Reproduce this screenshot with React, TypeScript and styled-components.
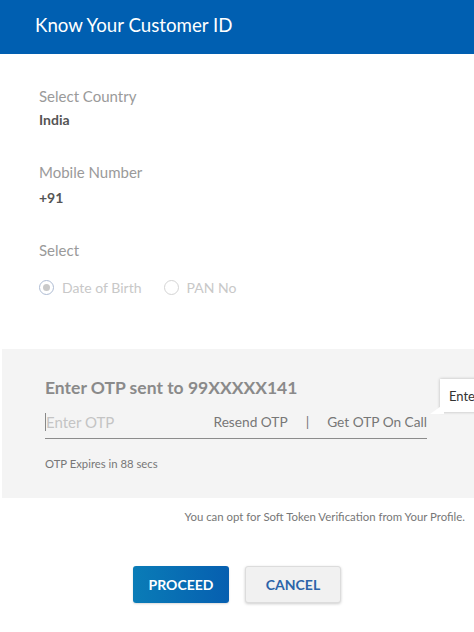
import React, { useState } from 'react';
import styled, { createGlobalStyle } from 'styled-components';

const GlobalStyle = createGlobalStyle`
  html, body {
    margin: 0;
    padding: 0;
    background: #ffffff;
    overflow-x: hidden;
  }
  body {
    font-family: Lato, "Open Sans", "Liberation Sans", sans-serif;
  }
`;

const Page = styled.div`
  width: 474px;
  min-height: 632px;
  overflow: hidden;
`;

const Header = styled.div`
  height: 54px;
  background: #005fb1;
  color: #ffffff;
  display: flex;
  align-items: center;
  padding: 0 0 4px 35px;
  box-sizing: border-box;
  font-size: 18.7px;
`;

const Form = styled.div`
  padding: 32px 0 0 39px;
  display: flex;
  flex-direction: column;
`;

const Field = styled.div<{ valueGap?: number }>`
  display: flex;
  flex-direction: column;
  gap: ${p => p.valueGap ?? 4}px;
  margin-bottom: 32px;
`;

const Label = styled.div`
  font-size: 15px;
  line-height: 20px;
  color: #9a9a9a;
`;

const Value = styled.div`
  font-size: 14px;
  line-height: 20px;
  font-weight: 700;
  color: #555555;
`;

const RadioRow = styled.div`
  display: flex;
  align-items: center;
  gap: 22px;
  margin-top: 17px;
  height: 20px;
`;

const RadioOption = styled.label`
  display: flex;
  align-items: center;
  gap: 8px;
  font-size: 14px;
  color: #c8c8c8;
  cursor: pointer;
`;

const RadioDot = styled.span<{ checked: boolean }>`
  width: 13px;
  height: 13px;
  border-radius: 50%;
  border: 1px solid ${p => (p.checked ? '#aebcd3' : '#d4d4d4')};
  display: flex;
  align-items: center;
  justify-content: center;
  background: #ffffff;

  &::after {
    content: '';
    width: 7px;
    height: 7px;
    border-radius: 50%;
    background: ${p => (p.checked ? '#c9c9c9' : 'transparent')};
  }
`;

const OtpPanel = styled.div`
  position: relative;
  margin: 52px 0 0 2px;
  background: #f4f4f4;
  padding: 28px 0 27px 43px;
  display: flex;
  flex-direction: column;
`;

const OtpTitle = styled.div`
  font-size: 17.5px;
  line-height: 22px;
  font-weight: 700;
  color: #8a8a8a;
`;

const OtpRow = styled.div`
  width: 382px;
  margin-top: 6px;
  height: 34px;
  display: flex;
  align-items: center;
  border-bottom: 1px solid #8c8c8c;
  box-sizing: border-box;
`;

const OtpInput = styled.input`
  flex: 1;
  min-width: 0;
  border: none;
  border-left: 1px solid #888;
  background: transparent;
  outline: none;
  font-family: inherit;
  font-size: 15px;
  height: 18px;
  padding: 0;
  color: #555;

  &::placeholder {
    color: #c4c4c4;
  }
`;

const LinkText = styled.span`
  font-size: 13.7px;
  color: #777777;
  white-space: nowrap;
`;

const Divider = styled.span`
  font-size: 14px;
  color: #777777;
  margin: 0 18px;
`;

const Expiry = styled.div`
  font-size: 11.3px;
  line-height: 14px;
  color: #777777;
  margin-top: 18px;
`;

const Tooltip = styled.div`
  position: absolute;
  left: 438px;
  top: 30px;
  width: 80px;
  height: 33px;
  background: #ffffff;
  box-shadow: 0 0 3px rgba(0, 0, 0, 0.25);
  padding-left: 9px;
  box-sizing: border-box;
  display: flex;
  align-items: center;
  font-size: 13px;
  color: #333333;
  white-space: nowrap;

  &::before {
    content: '';
    position: absolute;
    left: -10px;
    bottom: -2px;
    width: 14px;
    height: 10px;
    background: #ffffff;
    clip-path: polygon(100% 0, 100% 100%, 0 100%);
    filter: drop-shadow(0 0 1px rgba(0, 0, 0, 0.3));
  }
`;

const Note = styled.div`
  font-size: 11.4px;
  line-height: 14px;
  color: #777777;
  text-align: right;
  padding-right: 9px;
  margin-top: 12px;
`;

const Actions = styled.div`
  display: flex;
  justify-content: center;
  gap: 16px;
  margin-top: 42px;
`;

const Button = styled.button<{ primary?: boolean }>`
  width: 96px;
  height: 37px;
  border-radius: 3px;
  font-family: inherit;
  font-size: 14px;
  font-weight: 700;
  cursor: pointer;
  border: ${p => (p.primary ? 'none' : '1px solid #dcdcdc')};
  background: ${p => (p.primary ? 'linear-gradient(90deg, #0a7cb7 0%, #065fb0 100%)' : '#f1f1f1')};
  color: ${p => (p.primary ? '#ffffff' : '#2c64a9')};
  box-shadow: ${p => (p.primary ? '0 1px 2px rgba(0,0,0,0.15)' : '0 1px 3px rgba(0,0,0,0.2)')};
`;

export default function App() {
  const [choice, setChoice] = useState<'dob' | 'pan'>('dob');
  const [otp, setOtp] = useState('');

  return (
    <Page>
      <GlobalStyle />
      <Header>Know Your Customer ID</Header>
      <Form>
        <Field>
          <Label>Select Country</Label>
          <Value>India</Value>
        </Field>
        <Field valueGap={6}>
          <Label>Mobile Number</Label>
          <Value>+91</Value>
        </Field>
        <Label>Select</Label>
        <RadioRow>
          <RadioOption onClick={() => setChoice('dob')}>
            <RadioDot checked={choice === 'dob'} />
            Date of Birth
          </RadioOption>
          <RadioOption onClick={() => setChoice('pan')}>
            <RadioDot checked={choice === 'pan'} />
            PAN No
          </RadioOption>
        </RadioRow>
      </Form>

      <OtpPanel>
        <OtpTitle>Enter OTP sent to 99XXXXX141</OtpTitle>
        <OtpRow>
          <OtpInput placeholder="Enter OTP" value={otp} onChange={e => setOtp(e.target.value)} />
          <LinkText>Resend OTP</LinkText>
          <Divider>|</Divider>
          <LinkText>Get OTP On Call</LinkText>
        </OtpRow>
        <Expiry>OTP Expires in 88 secs</Expiry>
        <Tooltip>Enter OTP</Tooltip>
      </OtpPanel>

      <Note>You can opt for Soft Token Verification from Your Profile.</Note>

      <Actions>
        <Button primary>PROCEED</Button>
        <Button>CANCEL</Button>
      </Actions>
    </Page>
  );
}
